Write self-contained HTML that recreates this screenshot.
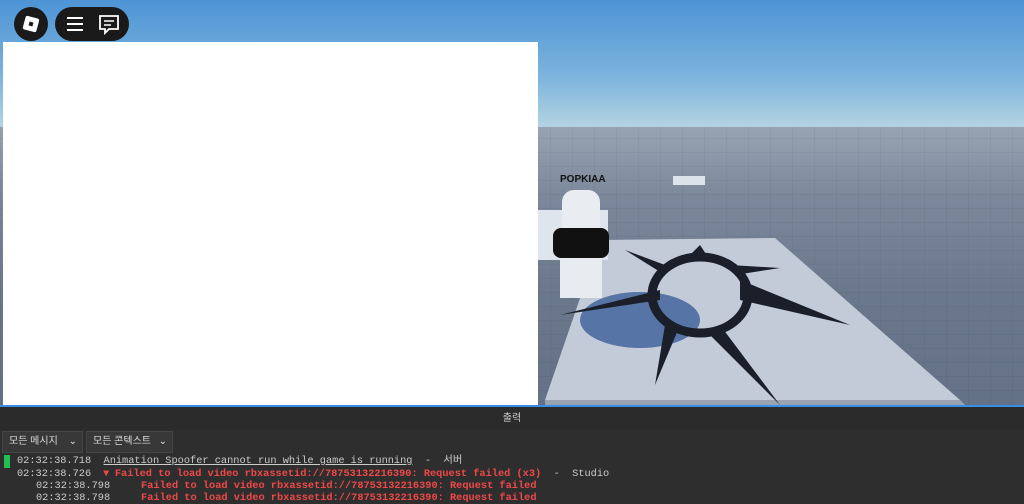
<!DOCTYPE html>
<html><head><meta charset="utf-8"><style>
body{margin:0;width:1024px;height:502px;overflow:hidden;position:relative;font-family:"Liberation Sans","Noto Sans CJK KR",sans-serif;background:#2e2e2e}
.sky{position:absolute;left:0;top:0;width:1024px;height:128px;background:linear-gradient(#4d94d6,#7cb4dc 60%,#b4d4e2)}
.ground{position:absolute;left:0;top:127px;width:1024px;height:278px;
background-image:repeating-linear-gradient(90deg,rgba(0,0,0,.04) 0 1px,transparent 1px 22px),repeating-linear-gradient(0deg,rgba(0,0,0,.04) 0 1px,transparent 1px 14px),linear-gradient(#98a3b2,#7c889b 25%,#6b788c 60%,#647186)}
.white{position:absolute;left:3px;top:42px;width:535px;height:363px;background:#fff}
.btn{position:absolute;background:#1a1a1a;border-radius:17px;height:34px;top:7px}
.out{position:absolute;left:0;top:405px;width:1024px;height:97px;background:#2e2e2e;border-top:2px solid #3a8ee6}
.mono{font-family:"Liberation Mono","Noto Sans CJK KR",monospace;font-size:10.3px;line-height:12px;position:absolute;white-space:pre}
.dd{position:absolute;top:431px;height:20px;background:#383838;border:1px solid #454545;color:#ddd;font-size:10px;line-height:20px;padding-left:6px}
</style></head><body>
<div class="sky"></div>
<div class="ground"></div>
<svg style="position:absolute;left:0;top:0" width="1024" height="405">
<polygon points="600,240 775,238 960,400 545,400" fill="#c3cbd8"/>
<polygon points="545,400 960,400 965,405 545,405" fill="#9aa3b2"/>
<ellipse cx="640" cy="320" rx="60" ry="28" fill="#2a4e92" opacity=".7"/>
<g fill="none" stroke="#1b1f2a" stroke-width="9"><ellipse cx="700" cy="295" rx="48" ry="38"/></g>
<g fill="#1b1f2a"><polygon points="690,255 700,245 710,260"/><polygon points="740,280 850,325 740,300"/><polygon points="720,325 780,405 705,330"/><polygon points="680,325 655,385 665,325"/><polygon points="660,290 560,315 660,300"/><polygon points="730,265 780,268 735,275"/><polygon points="665,265 625,250 665,275"/></g>
<rect x="538" y="210" width="70" height="50" fill="#dfe5ec"/>
<rect x="560" y="250" width="42" height="48" fill="#e8ecf0"/>
<rect x="562" y="190" width="38" height="60" rx="12" fill="#e9edf2"/>
<rect x="553" y="228" width="56" height="30" rx="8" fill="#111"/>
<rect x="673" y="176" width="32" height="9" fill="#dde3ea"/>
<text x="560" y="182" font-size="10" font-weight="bold" fill="#111" font-family="Liberation Sans">POPKIAA</text>
</svg>
<div class="white"></div>
<div class="btn" style="left:14px;width:34px"><div style="position:absolute;left:10px;top:10px;width:14px;height:14px;background:#fff;transform:rotate(15deg);border-radius:2px"><div style="position:absolute;left:5px;top:5px;width:4px;height:4px;background:#1a1a1a"></div></div></div>
<div class="btn" style="left:55px;width:74px">
<svg width="74" height="34"><g stroke="#fff" stroke-width="2"><line x1="12" y1="11" x2="28" y2="11"/><line x1="12" y1="17" x2="28" y2="17"/><line x1="12" y1="23" x2="28" y2="23"/></g><path d="M45 9h18v13h-9l-4 4v-4h-5z" fill="none" stroke="#fff" stroke-width="1.8"/><g stroke="#fff" stroke-width="1.5"><line x1="49" y1="14" x2="59" y2="14"/><line x1="49" y1="18" x2="56" y2="18"/></g></svg></div>
<div class="out">
<div style="position:absolute;left:0;top:0;width:1024px;height:23px;background:#2b2b2b;color:#ccc;font-size:10px;text-align:center;line-height:23px">출력</div>
</div>
<div class="dd" style="left:2px;width:73px">모든 메시지 <span style="position:absolute;right:5px">⌄</span></div>
<div class="dd" style="left:86px;width:79px">모든 콘텍스트 <span style="position:absolute;right:5px">⌄</span></div>
<div style="position:absolute;left:4px;top:455px;width:6px;height:13px;background:#1fc050"></div>
<div class="mono" style="left:17px;top:455px;color:#ccc">02:32:38.718  <span style="text-decoration:underline">Animation Spoofer cannot run while game is running</span>  -  서버</div>
<div class="mono" style="left:17px;top:468px;color:#ccc">02:32:38.726  <b style="color:#f04848">▾ Failed to load video rbxassetid://78753132216390: Request failed (x3)</b>  -  Studio</div>
<div class="mono" style="left:36px;top:480px;color:#ccc">02:32:38.798     <b style="color:#f04848">Failed to load video rbxassetid://78753132216390: Request failed</b></div>
<div class="mono" style="left:36px;top:492px;color:#ccc">02:32:38.798     <b style="color:#f04848">Failed to load video rbxassetid://78753132216390: Request failed</b></div>
</body></html>
